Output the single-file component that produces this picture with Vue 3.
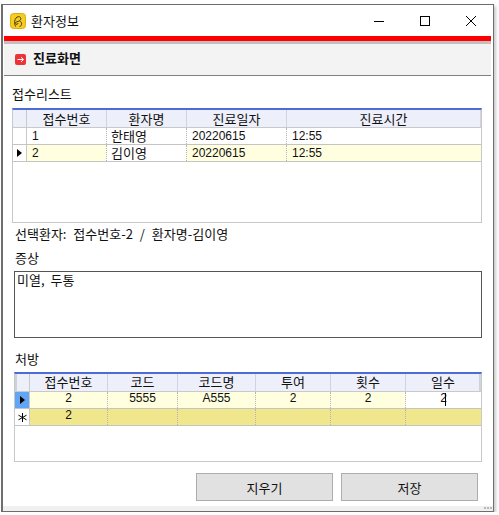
<script setup>
const receiptCols = [
  { label: '접수번호', key: 'no' },
  { label: '환자명', key: 'name' },
  { label: '진료일자', key: 'date' },
  { label: '진료시간', key: 'time' }
]
const receipts = [
  { no: '1', name: '한태영', date: '20220615', time: '12:55' },
  { no: '2', name: '김이영', date: '20220615', time: '12:55', selected: true }
]
const rxCols = ['접수번호', '코드', '코드명', '투여', '횟수', '일수']
const rxRow = ['2', '5555', 'A555', '2', '2']
const rxNew = ['2', '', '', '', '', '']
</script>

<template>
  <div class="window">
    <div class="titlebar">
      <svg class="app-icon" viewBox="0 0 16 16">
        <rect x="0.5" y="0.5" width="15" height="15" rx="3" fill="#f4cc22" stroke="#dcae0a" />
        <path d="M5.5 13.5C4 10 4.5 7 6 5c1-1.5 3.5-2 4.5-.5S10 8 8 8.5 5 9 6 11c.6 1.2 1.5.5 2-1M9.5 8c1.5.5 2.5 1.5 2 3.5-.3 1.2-1 2-2 2" fill="none" stroke="#4a3c14" stroke-width="1" />
      </svg>
      <span class="title">환자정보</span>
      <div class="controls">
        <svg viewBox="0 0 12 12"><path d="M1 6.5h10" stroke="#000" fill="none" /></svg>
        <svg viewBox="0 0 12 12"><rect x="1.5" y="1.5" width="9" height="9" stroke="#000" fill="none" /></svg>
        <svg viewBox="0 0 12 12"><path d="M1 1l10 10M11 1L1 11" stroke="#000" fill="none" /></svg>
      </div>
    </div>
    <div class="red-bar"></div>
    <div class="heading">
      <svg class="go-icon" viewBox="0 0 11 11">
        <rect width="11" height="11" rx="2" fill="#ee3338" />
        <path d="M2.5 5.5h6M6 3.2l2.5 2.3L6 7.8" fill="none" stroke="#fff" />
      </svg>
      <strong>진료화면</strong>
    </div>

    <div class="body">
      <div class="label list-label">접수리스트</div>
      <div class="grid receipt-grid">
        <div class="row head">
          <div class="marker"></div>
          <div v-for="c in receiptCols" :key="c.key" class="cell">{{ c.label }}</div>
        </div>
        <div v-for="r in receipts" :key="r.no" class="row data" :class="{ selected: r.selected }">
          <div class="marker"><i v-if="r.selected" class="arrow"></i></div>
          <div
            v-for="c in receiptCols"
            :key="c.key"
            class="cell left"
            :class="{ plain: r.selected && c.key === 'name', num: c.key !== 'name' }"
          >{{ r[c.key] }}</div>
        </div>
      </div>

      <div class="label selected-label">선택환자: 접수번호-2 / 환자명-김이영</div>

      <div class="label symptom-label">증상</div>
      <div class="memo">미열, 두통</div>

      <div class="label rx-label">처방</div>
      <div class="grid rx-grid">
        <div class="row head">
          <div class="marker"></div>
          <div v-for="c in rxCols" :key="c" class="cell">{{ c }}</div>
        </div>
        <div class="row data current">
          <div class="marker active"><i class="arrow"></i></div>
          <div v-for="(v, i) in rxRow" :key="i" class="cell num">{{ v }}</div>
          <div class="cell num editing">2<i class="caret"></i></div>
        </div>
        <div class="row data new-row">
          <div class="marker">
            <svg class="star" viewBox="0 0 9 9">
              <path d="M4.5 0v9M0.5 2.2l8 4.6M8.5 2.2l-8 4.6" stroke="#000" fill="none" />
            </svg>
          </div>
          <div v-for="(v, i) in rxNew" :key="i" class="cell num">{{ v }}</div>
        </div>
      </div>

      <div class="actions">
        <button class="btn">지우기</button>
        <button class="btn">저장</button>
      </div>
    </div>

    <div class="statusbar">
      <span class="grip"><i></i><i></i><i></i></span>
    </div>
  </div>
</template>

<style>
html, body {
  margin: 0;
  background: #fff;
}
</style>

<style scoped>
.window {
  box-sizing: border-box;
  width: 493px;
  height: 508px;
  margin: 4px 0 0 1px;
  border: 1px solid #6e6e6e;
  border-left-width: 2px;
  box-shadow: 2px 2px 3px rgba(0, 0, 0, 0.22);
  background: #fff;
  font-family: "Noto Sans CJK KR", "Noto Sans", sans-serif;
  font-size: 13px;
  color: #111;
  display: flex;
  flex-direction: column;
}

.titlebar {
  height: 31px;
  display: flex;
  align-items: center;
  padding-left: 7px;
  flex-shrink: 0;
}
.app-icon {
  width: 16px;
  height: 16px;
  margin-right: 5px;
}
.controls {
  margin-left: auto;
  display: flex;
  gap: 34px;
  padding-right: 16px;
}
.controls svg {
  width: 12px;
  height: 12px;
}

.red-bar {
  height: 5px;
  margin: 0 2px 0 1px;
  background: #ff0000;
  border-bottom: 3px solid #c0c0c0;
  flex-shrink: 0;
}

.heading {
  height: 32px;
  margin: 0 2px 0 1px;
  box-sizing: border-box;
  background: #f3f3f3;
  border-bottom: 1px solid #808080;
  display: flex;
  align-items: center;
  padding-left: 11px;
  gap: 7px;
  flex-shrink: 0;
}
.heading strong {
  margin-bottom: 4px;
  font-weight: 700;
}
.go-icon {
  width: 11px;
  height: 11px;
}

.body {
  flex: 1;
  margin: 0 2px 0 1px;
  display: flex;
  flex-direction: column;
}

.label {
  line-height: 16px;
  padding-left: 11px;
}
.list-label {
  margin-top: 9px;
  height: 17px;
  line-height: 17px;
  padding-left: 8px;
}
.selected-label {
  margin-top: 3px;
  word-spacing: 4px;
}
.symptom-label {
  margin-top: 8px;
}
.rx-label {
  margin-top: 13px;
}

.grid {
  box-sizing: border-box;
  border: 1px solid #c8c8c8;
  border-top: 2px solid #4f6bd8;
  background: #fff;
  flex-shrink: 0;
}
.receipt-grid {
  width: 470px;
  height: 115px;
  margin-left: 8px;
  margin-top: 6px;
}
.rx-grid {
  width: 468px;
  height: 90px;
  margin-left: 10px;
  margin-top: 5px;
}

.row {
  display: grid;
}
.receipt-grid .row {
  grid-template-columns: 14px 80px 80px 100px 1fr;
}
.rx-grid .row {
  grid-template-columns: 15px 78px 70px 78px 75px 75px 1fr;
}

.cell {
  box-sizing: border-box;
  text-align: center;
  line-height: 15px;
  border-right: 1px dotted #b4b4b4;
  white-space: nowrap;
}
.cell:last-child {
  border-right: none;
}
.cell.left {
  text-align: left;
  padding-left: 4px;
}
.cell.left.num {
  padding-left: 5px;
}
.num {
  font-family: "Liberation Sans", sans-serif;
  font-size: 12px;
}

.head {
  box-sizing: border-box;
  height: 18px;
  background: #edf0fa;
  border-bottom: 1px solid #c9c9c9;
}
.rx-grid .head {
  box-shadow: inset 2px 0 #cdd1dc, inset -2px 0 #cdd1dc;
}
.head .cell {
  border-right: 1px solid #d0d4de;
  line-height: 17px;
}
.rx-grid .head .cell {
  line-height: 15px;
}

.data {
  height: 17px;
  box-sizing: border-box;
  border-bottom: 1px solid #c4c4c4;
}
.receipt-grid .data .cell {
  line-height: 16px;
}
.rx-grid .data .cell {
  line-height: 13px;
}

.marker {
  box-sizing: border-box;
  border-right: 1px solid #c9c9c9;
  display: flex;
  align-items: center;
  justify-content: center;
}
.marker.active {
  background: #62a5f5;
}
.star {
  width: 9px;
  height: 9px;
}

.arrow {
  display: block;
  width: 0;
  height: 0;
  border-left: 5px solid #000;
  border-top: 4px solid transparent;
  border-bottom: 4px solid transparent;
}

.selected .cell {
  background: #ffffe0;
}
.selected .cell.plain {
  background: #fff;
}
.current .cell {
  background: #ffffe0;
}
.current .cell.editing {
  background: #fff;
  position: relative;
}
.caret {
  position: absolute;
  top: 1px;
  left: 50%;
  margin-left: 1px;
  width: 1px;
  height: 13px;
  background: #000;
}
.new-row .cell {
  background: #f0e68c;
}

.memo {
  box-sizing: border-box;
  width: 468px;
  height: 67px;
  margin: 5px 0 0 10px;
  border: 1px solid #555;
  padding: 0 2px;
  line-height: 15px;
  word-spacing: 3px;
  flex-shrink: 0;
}

.actions {
  display: flex;
  gap: 8px;
  margin: 11px 0 0 192px;
}
.btn {
  box-sizing: border-box;
  width: 137px;
  height: 28px;
  background: #e1e1e1;
  border: 1px solid #adadad;
  font: inherit;
  color: #111;
  padding: 0;
}

.statusbar {
  height: 5px;
  background: #f0f0f0;
  position: relative;
  flex-shrink: 0;
}
.grip {
  position: absolute;
  right: 1px;
  top: 1px;
  display: flex;
  gap: 1px;
}
.grip i {
  width: 2px;
  height: 2px;
  background: #b8b8b8;
}
</style>
